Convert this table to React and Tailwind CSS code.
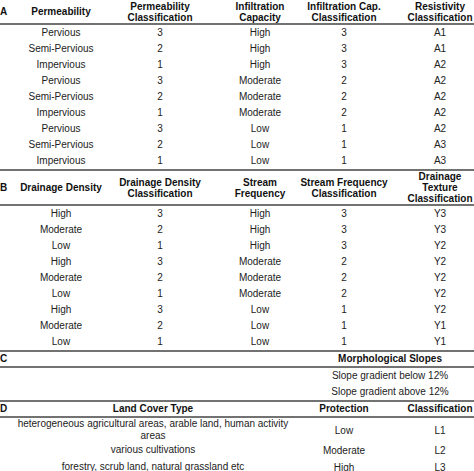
import React from "react";

const W = ["w-[18px]", "w-[86px]", "w-[112px]", "w-[88px]", "w-[80px]", "w-[112px]"];

function Line() {
  return <div className="h-[2px] w-full bg-[#727272]" />;
}

function Cell({ w, children, bold, className = "" }) {
  return (
    <div
      className={`${w} shrink-0 flex flex-col items-center justify-center text-center whitespace-nowrap ${
        bold ? "font-bold text-[#111]" : ""
      } ${className}`}
    >
      {children}
    </div>
  );
}

function Label({ children }) {
  return (
    <div className="w-[18px] shrink-0 flex items-center font-bold text-[#111]">{children}</div>
  );
}

function Header({ label, cols, h }) {
  return (
    <div className={`flex ${h} leading-[11px]`}>
      <Label>{label}</Label>
      {cols.map((c, i) => (
        <Cell key={i} w={W[i + 1]} bold>
          {c.map((l, j) => (
            <span key={j}>{l}</span>
          ))}
        </Cell>
      ))}
    </div>
  );
}

function DataRow({ vals }) {
  return (
    <div className="flex h-[16px] leading-[16px]">
      <div className="w-[18px] shrink-0" />
      {vals.map((v, i) => (
        <Cell key={i} w={W[i + 1]}>
          {v}
        </Cell>
      ))}
    </div>
  );
}

const A = [
  ["Pervious", "3", "High", "3", "A1"],
  ["Semi-Pervious", "2", "High", "3", "A1"],
  ["Impervious", "1", "High", "3", "A2"],
  ["Pervious", "3", "Moderate", "2", "A2"],
  ["Semi-Pervious", "2", "Moderate", "2", "A2"],
  ["Impervious", "1", "Moderate", "2", "A2"],
  ["Pervious", "3", "Low", "1", "A2"],
  ["Semi-Pervious", "2", "Low", "1", "A3"],
  ["Impervious", "1", "Low", "1", "A3"],
];

const B = [
  ["High", "3", "High", "3", "Y3"],
  ["Moderate", "2", "High", "3", "Y3"],
  ["Low", "1", "High", "3", "Y2"],
  ["High", "3", "Moderate", "2", "Y2"],
  ["Moderate", "2", "Moderate", "2", "Y2"],
  ["Low", "1", "Moderate", "2", "Y2"],
  ["High", "3", "Low", "1", "Y2"],
  ["Moderate", "2", "Low", "1", "Y1"],
  ["Low", "1", "Low", "1", "Y1"],
];

function DRow({ h, land, prot, cls }) {
  return (
    <div className={`flex ${h}`}>
      <div className="w-[18px] shrink-0" />
      <div className="w-[270px] shrink-0 flex flex-col items-center justify-center leading-[12px] whitespace-nowrap">
        {land.map((l, i) => (
          <span key={i}>{l}</span>
        ))}
      </div>
      <div className="w-[16px] shrink-0" />
      <Cell w="w-[80px]">{prot}</Cell>
      <Cell w="w-[112px]">{cls}</Cell>
    </div>
  );
}

export default function App() {
  return (
    <div className="w-[474px] h-[471px] overflow-hidden bg-white">
      <div
        className="w-[496px] text-[10px] text-[#222]"
        style={{ fontFamily: '"Liberation Sans", Arial, sans-serif' }}
      >
        <Header
          label="A"
          h="h-[23px]"
          cols={[
            ["Permeability"],
            ["Permeability", "Classification"],
            ["Infiltration", "Capacity"],
            ["Infiltration Cap.", "Classification"],
            ["Resistivity", "Classification"],
          ]}
        />
        <Line />
        {A.map((r, i) => (
          <DataRow key={i} vals={r} />
        ))}
        <Line />
        <Header
          label="B"
          h="h-[33px]"
          cols={[
            ["Drainage Density"],
            ["Drainage Density", "Classification"],
            ["Stream", "Frequency"],
            ["Stream Frequency", "Classification"],
            ["Drainage", "Texture", "Classification"],
          ]}
        />
        <Line />
        {B.map((r, i) => (
          <DataRow key={i} vals={r} />
        ))}
        <Line />
        <div className="flex h-[14px] leading-[14px]">
          <Label>C</Label>
          <div className="w-[286px] shrink-0" />
          <Cell w="w-[172px]" bold>
            Morphological Slopes
          </Cell>
        </div>
        <Line />
        <div className="flex h-[16px] leading-[16px]">
          <div className="w-[304px] shrink-0" />
          <Cell w="w-[172px]">Slope gradient below 12%</Cell>
        </div>
        <div className="flex h-[16px] leading-[16px]">
          <div className="w-[304px] shrink-0" />
          <Cell w="w-[172px]">Slope gradient above 12%</Cell>
        </div>
        <Line />
        <div className="flex h-[14px] leading-[14px]">
          <Label>D</Label>
          <div className="w-[270px] shrink-0 text-center font-bold text-[#111]">Land Cover Type</div>
          <div className="w-[16px] shrink-0" />
          <Cell w="w-[80px]" bold>
            Protection
          </Cell>
          <Cell w="w-[112px]" bold>
            Classification
          </Cell>
        </div>
        <Line />
        <DRow
          h="h-[24px]"
          land={["heterogeneous agricultural areas, arable land, human activity", "areas"]}
          prot="Low"
          cls="L1"
        />
        <DRow h="h-[16px]" land={["various cultivations"]} prot="Moderate" cls="L2" />
        <DRow h="h-[18px]" land={["forestry, scrub land, natural grassland etc"]} prot="High" cls="L3" />
      </div>
    </div>
  );
}
